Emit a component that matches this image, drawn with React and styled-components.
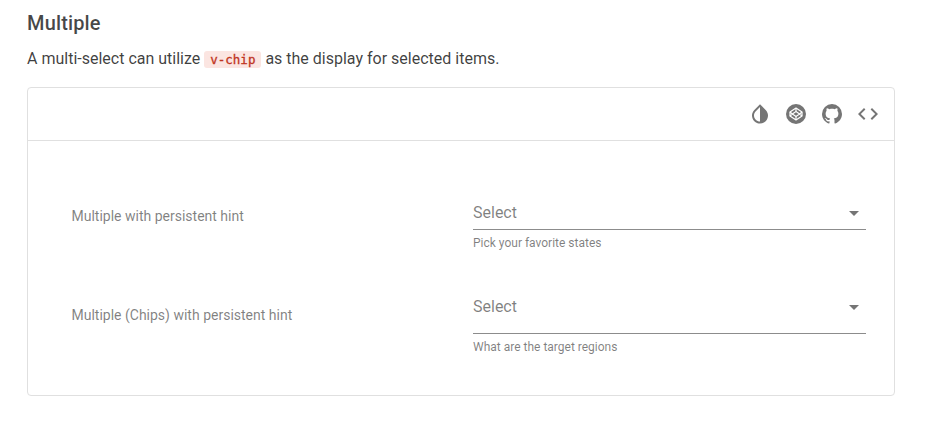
import React from 'react';
import styled, { createGlobalStyle } from 'styled-components';

const GlobalStyle = createGlobalStyle`
  html, body {
    margin: 0;
    background: #fff;
    font-family: Roboto, "Liberation Sans", sans-serif;
  }
`;

const icons = {
  invert: 'M12,19.58V5.1L7.76,9.34C6.62,10.47 6,12 6,13.58C6,15.19 6.62,16.69 7.76,17.83C8.89,18.96 10.4,19.58 12,19.58M17.66,7.93C20.78,11.05 20.78,16.12 17.66,19.24C16.1,20.8 14.05,21.58 12,21.58C9.95,21.58 7.9,20.8 6.34,19.24C3.22,16.12 3.22,11.05 6.34,7.93L12,2.27L17.66,7.93Z',
  github: 'M12,2A10,10 0 0,0 2,12C2,16.42 4.87,20.17 8.84,21.5C9.34,21.58 9.5,21.27 9.5,21C9.5,20.77 9.5,20.14 9.5,19.31C6.73,19.91 6.14,17.97 6.14,17.97C5.68,16.81 5.03,16.5 5.03,16.5C4.12,15.88 5.1,15.9 5.1,15.9C6.1,15.97 6.63,16.93 6.63,16.93C7.5,18.45 8.97,18 9.54,17.76C9.63,17.11 9.89,16.67 10.17,16.42C7.95,16.17 5.62,15.31 5.62,11.5C5.62,10.39 6,9.5 6.65,8.79C6.55,8.54 6.2,7.5 6.75,6.15C6.75,6.15 7.59,5.88 9.5,7.17C10.29,6.95 11.15,6.84 12,6.84C12.85,6.84 13.71,6.95 14.5,7.17C16.41,5.88 17.25,6.15 17.25,6.15C17.8,7.5 17.45,8.54 17.35,8.79C18,9.5 18.38,10.39 18.38,11.5C18.38,15.32 16.04,16.16 13.81,16.41C14.17,16.72 14.5,17.33 14.5,18.26C14.5,19.6 14.5,20.68 14.5,21C14.5,21.27 14.66,21.59 15.17,21.5C19.14,20.16 22,16.42 22,12A10,10 0 0,0 12,2Z',
  code: 'M14.6,16.6L19.2,12L14.6,7.4L16,6L22,12L16,18L14.6,16.6M9.4,16.6L4.8,12L9.4,7.4L8,6L2,12L8,18L9.4,16.6Z',
};

const rows = [
  { label: 'Multiple with persistent hint', hint: 'Pick your favorite states', fieldHeight: 35, labelTop: 12 },
  { label: 'Multiple (Chips) with persistent hint', hint: 'What are the target regions', fieldHeight: 45, labelTop: 17 },
];

const Codepen = () => (
  <svg viewBox="0 0 24 24" width="24" height="24">
    <circle cx="12" cy="12" r="10" fill="#757575" />
    <g fill="none" stroke="#fff" strokeWidth="1.2" strokeLinejoin="round">
      <path d="M12 6l6 4v4l-6 4-6-4v-4z" />
      <path d="M12 9.6L15.6 12 12 14.4 8.4 12z" />
      <path d="M12 6v3.6M12 14.4V18M6 10l2.4 2L6 14M18 10l-2.4 2 2.4 2" />
    </g>
  </svg>
);

const Icon = ({ d }) => (
  <svg viewBox="0 0 24 24" width="24" height="24">
    <path d={d} fill="#757575" />
  </svg>
);

const App = () => (
  <Page>
    <GlobalStyle />
    <Title>Multiple</Title>
    <Intro>
      A multi-select can utilize <Code>v-chip</Code> as the display for selected items.
    </Intro>
    <Card>
      <Toolbar>
        <IconButton><Icon d={icons.invert} /></IconButton>
        <IconButton><Codepen /></IconButton>
        <IconButton><Icon d={icons.github} /></IconButton>
        <IconButton><Icon d={icons.code} /></IconButton>
      </Toolbar>
      <Body>
        {rows.map((row) => (
          <Row key={row.label}>
            <Label $top={row.labelTop}>{row.label}</Label>
            <Field>
              <Control $height={row.fieldHeight}>
                <Placeholder>Select</Placeholder>
                <Caret />
              </Control>
              <Hint>{row.hint}</Hint>
            </Field>
          </Row>
        ))}
      </Body>
    </Card>
  </Page>
);

export default App;

const Page = styled.div`
  width: 868px;
  padding: 0 0 26px 27px;
`;
const Title = styled.h2`
  margin: 0;
  padding-top: 11px;
  font-size: 20px;
  line-height: 24px;
  font-weight: 500;
  letter-spacing: 0.15px;
  color: rgba(0, 0, 0, 0.72);
`;
const Intro = styled.p`
  margin: 12px 0 16px;
  font-size: 16px;
  line-height: 24px;
  color: rgba(0, 0, 0, 0.76);
`;
const Code = styled.code`
  display: inline-block;
  padding: 0 6px;
  height: 17px;
  line-height: 17px;
  border-radius: 3px;
  background: #fbe5e1;
  color: #c0341d;
  font-family: "DejaVu Sans Mono", "Liberation Mono", monospace;
  font-size: 12.5px;
  font-weight: 400;
  -webkit-text-stroke: 0.3px #c0341d;
`;
const Card = styled.div`
  box-sizing: border-box;
  height: 309px;
  border: 1px solid #e0e0e0;
  border-radius: 4px;
`;
const Toolbar = styled.div`
  display: flex;
  justify-content: flex-end;
  align-items: center;
  gap: 12px;
  height: 52px;
  padding-right: 14px;
  border-bottom: 1px solid #e0e0e0;
`;
const IconButton = styled.div`
  display: flex;
  width: 24px;
  height: 24px;
`;
const Body = styled.div`
  padding: 54px 28px 0 43.5px;
`;
const Row = styled.div`
  display: flex;
  align-items: flex-start;
  margin-bottom: 39px;
`;
const Label = styled.div`
  width: 401.5px;
  padding-top: ${(p) => p.$top}px;
  font-size: 14px;
  line-height: 18px;
  color: rgba(0, 0, 0, 0.5);
`;
const Field = styled.div`
  flex: 1;
`;
const Control = styled.div`
  display: flex;
  align-items: flex-start;
  justify-content: space-between;
  height: ${(p) => p.$height}px;
  padding-top: 8px;
  box-sizing: border-box;
  border-bottom: 1px solid #8c8c8c;
`;
const Placeholder = styled.span`
  font-size: 16px;
  line-height: 19px;
  color: rgba(0, 0, 0, 0.5);
`;
const Caret = styled.span`
  width: 0;
  height: 0;
  margin: 8px 7px 0 0;
  border-left: 5px solid transparent;
  border-right: 5px solid transparent;
  border-top: 5px solid #757575;
`;
const Hint = styled.div`
  margin-top: 6px;
  font-size: 12px;
  line-height: 14px;
  color: rgba(0, 0, 0, 0.5);
`;
